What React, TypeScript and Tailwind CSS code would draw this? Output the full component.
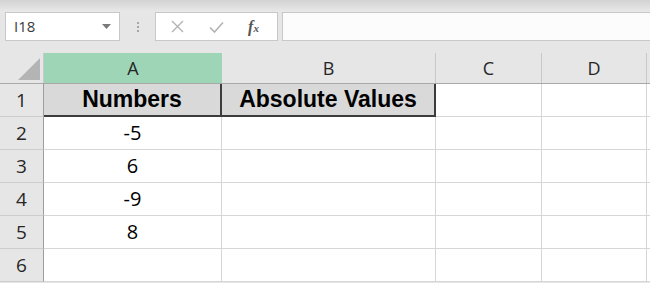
import React from "react";

const cols = [
  { key: "A", w: "w-[178px]" },
  { key: "B", w: "w-[214px]" },
  { key: "C", w: "w-[106px]" },
  { key: "D", w: "w-[105px]" },
];

const data: Record<number, string> = { 2: "-5", 3: "6", 4: "-9", 5: "8" };

export default function App() {
  return (
    <div className="w-[650px] h-[283px] overflow-hidden bg-[#e6e6e6] font-['Liberation_Sans',Arial,sans-serif]">
      {/* top band */}
      <div className="h-[12px] bg-gradient-to-b from-[#d3d3d3] to-[#e9e9e9]" />
      {/* formula bar */}
      <div className="flex h-[29px] items-stretch bg-[#e6e6e6]">
        <div className="ml-[5px] w-[115px] bg-white border border-[#c8c8c8] flex items-center justify-between pl-[8px] pr-[8px]">
          <span className="text-[15px] text-[#3b3b3b] font-['Open_Sans',sans-serif]">I18</span>
          <svg width="9" height="5" viewBox="0 0 9 5">
            <path d="M0 0 L9 0 L4.5 5 Z" fill="#7a7a7a" />
          </svg>
        </div>
        <div className="w-[35px] flex flex-col items-center justify-center gap-[2px]">
          <div className="w-[2px] h-[2px] bg-[#a6a6a6]" />
          <div className="w-[2px] h-[2px] bg-[#a6a6a6]" />
          <div className="w-[2px] h-[2px] bg-[#a6a6a6]" />
        </div>
        <div className="w-[123px] bg-white border border-[#c8c8c8] flex items-center">
          <div className="w-[42px] flex justify-center">
            <svg width="13" height="13" viewBox="0 0 13 13">
              <path d="M1 1 L12 12 M12 1 L1 12" stroke="#b3b3b3" strokeWidth="1.4" />
            </svg>
          </div>
          <div className="w-[36px] flex justify-center">
            <svg width="15" height="12" viewBox="0 0 15 12">
              <path d="M1 6.5 L5.5 11 L14 1.5" stroke="#b3b3b3" strokeWidth="1.6" fill="none" />
            </svg>
          </div>
          <div className="flex-1 flex justify-center pr-[4px]">
            <span className="font-['Liberation_Serif',serif] italic font-bold text-[16px] text-[#555] leading-none">
              f<span className="text-[11px]">x</span>
            </span>
          </div>
        </div>
        <div className="ml-[4px] flex-1 bg-[#fcfcfc] border border-[#c8c8c8] border-r-0" />
      </div>
      <div className="h-[12px]" />
      {/* grid */}
      <div className="bg-white">
        {/* header row */}
        <div className="flex h-[31px] bg-[#e6e6e6] border-b border-[#a8a8a8]">
          <div className="w-[44px] shrink-0 relative border-r border-[#c8c8c8]">
            <svg className="absolute left-[18px] top-[5px]" width="22" height="22" viewBox="0 0 22 22">
              <path d="M22 0 L22 22 L0 22 Z" fill="#b4b4b4" />
            </svg>
          </div>
          {cols.map((c) => (
            <div
              key={c.key}
              className={`${c.w} shrink-0 flex items-center justify-center text-[18px] text-[#262626] font-['Open_Sans',sans-serif] ${
                c.key === "A" ? "bg-[#9fd5b7]" : "border-r border-[#c8c8c8]"
              }`}
            >
              {c.key}
            </div>
          ))}
          <div className="flex-1" />
        </div>
        {/* rows */}
        {[1, 2, 3, 4, 5, 6].map((r) => (
          <div key={r} className="flex h-[33px]">
            <div className="w-[44px] shrink-0 bg-[#e6e6e6] border-r border-[#9e9e9e] border-b border-b-[#cdcdcd] flex items-center justify-center text-[19px] text-[#262626] font-['Open_Sans',sans-serif]">
              {r}
            </div>
            {cols.map((c) => {
              const header = r === 1 && (c.key === "A" || c.key === "B");
              return (
                <div
                  key={c.key}
                  className={`${c.w} shrink-0 flex items-center justify-center ${
                    header
                      ? "bg-[#d9d9d9] border-r-2 border-b-2 border-[#3c3c3c] font-bold text-[23px] text-black"
                      : "border-r border-b border-[#d6d6d6] text-[20px] text-black font-['Open_Sans',sans-serif]"
                  }`}
                >
                  {r === 1 && c.key === "A" ? "Numbers" : null}
                  {r === 1 && c.key === "B" ? "Absolute Values" : null}
                  {c.key === "A" && data[r] ? data[r] : null}
                </div>
              );
            })}
            <div className="flex-1 border-b border-[#d6d6d6]" />
          </div>
        ))}
      </div>
    </div>
  );
}
